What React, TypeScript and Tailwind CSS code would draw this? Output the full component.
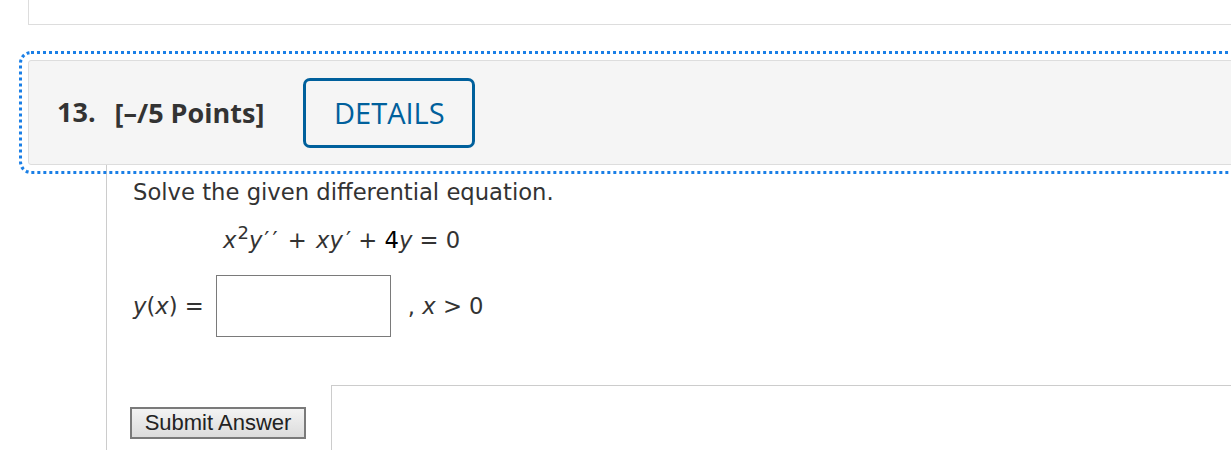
import React from "react";

export default function App() {
  return (
    <div className="w-[1231px] h-[450px] overflow-hidden bg-white relative">
      {/* previous card (cut off) */}
      <div className="ml-[28px] mt-[-20px] h-[45px] w-[1300px] border border-[#ddd]" />

      {/* question header */}
      <div className="mt-[35px] ml-[28px] w-[1300px] h-[105px] border border-[#ddd] bg-[#f5f5f5] rounded-[3px] outline-3 outline-dotted outline-offset-6 outline-[#1a7fe6] flex items-center pl-[28px] font-['Open_Sans',sans-serif] text-[#333]">
        <span className="font-bold text-[27px] leading-none -mt-[3px]">13.</span>
        <span className="font-bold text-[27px] leading-none ml-[19px]">[–/5 Points]</span>
        <button className="ml-[39px] w-[172px] h-[70px] border-[3px] border-[#00609c] rounded-[7px] text-[#00609c] text-[29px] bg-transparent">
          DETAILS
        </button>
      </div>

      {/* question body */}
      <div className="ml-[106px] border-l border-[#ccc] h-[300px] pl-[26px] pt-[11px] font-['DejaVu_Sans',Verdana,sans-serif] text-[22.7px] leading-[32px] text-[#333]">
        <p>Solve the given differential equation.</p>
        <p className="mt-[16px] pl-[90px] whitespace-pre">
          <i>x</i>
          <sup className="text-[18px] relative -top-[9px] ml-[1px]">2</sup>
          <i>y</i>
          <span className="tracking-[3px] ml-[2px]">′′</span>
          <span className="whitespace-pre"> + </span>
          <i className="ml-[2px]">xy</i>
          <span className="ml-[3px]">′</span>
          <span className="whitespace-pre"> + </span>
          <span className="text-black">4</span>
          <i>y</i>
          <span className="whitespace-pre"> = 0</span>
        </p>
        <div className="mt-[19px] flex items-center">
          <span className="whitespace-pre">
            <i>y</i>(<i>x</i>) =
          </span>
          <div className="ml-[12px] w-[175px] h-[62px] border border-[#7a7a7a] bg-white" />
          <span className="ml-[17px] whitespace-pre">
            , <i>x</i> &gt; 0
          </span>
        </div>
        <div className="mt-[48px] -ml-[26px] flex">
          <div className="w-[224px] shrink-0 pl-[23px] pt-[21px]">
            <button className="w-[176px] h-[32px] border-2 border-[#7a7a7a] bg-linear-to-b from-[#f3f3f3] to-[#dcdcdc] text-[22px] leading-none text-[#222] font-['Liberation_Sans',Arial,sans-serif]">
              Submit Answer
            </button>
          </div>
          <div className="flex-1 h-[120px] border-t border-l border-[#ccc]" />
        </div>
      </div>
    </div>
  );
}
